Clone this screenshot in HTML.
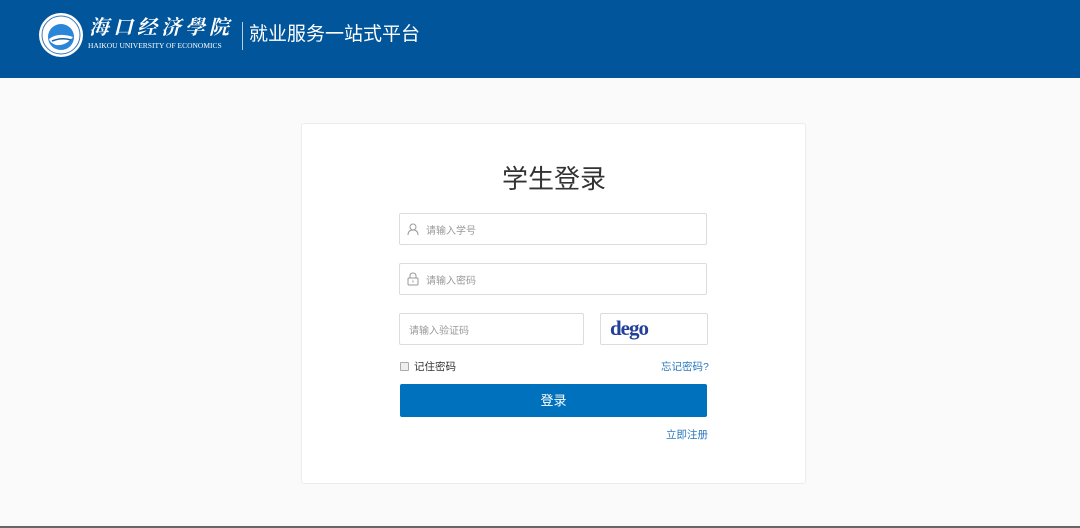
<!DOCTYPE html>
<html><head><meta charset="utf-8"><style>
*{margin:0;padding:0;box-sizing:border-box}
body{width:1080px;height:528px;background:#fafafa;font-family:"Liberation Sans","Noto Sans CJK SC",sans-serif;position:relative;overflow:hidden}
.hd{position:absolute;left:0;top:0;width:1080px;height:78px;background:#00559b}
.card{position:absolute;left:301px;top:123px;width:505px;height:361px;background:#fff;border:1px solid #ececec;border-radius:3px}
.inp{position:absolute;background:#fff;border:1px solid #dcdcdc;border-radius:2px;font-size:10px;color:#999;display:flex;align-items:center}
.a{position:absolute}
</style></head><body>
<div class="hd">
 <svg class="a" style="left:38px;top:12px" width="46" height="46" viewBox="0 0 46 46">
  <circle cx="23" cy="23" r="22" fill="#fff"/>
  <circle cx="23" cy="23" r="19" fill="#fff" stroke="#3a78c0" stroke-width="1"/>
  <circle cx="23" cy="25" r="13" fill="#2a86d8"/>
  <path d="M11 27 Q20 20 35 25 Q28 34 18 33 Q12 31 11 27Z" fill="#fff"/>
  <path d="M14 29 Q24 25 33 28" stroke="#1a5fa8" stroke-width="1.5" fill="none"/>
 </svg>
 <div class="a" style="left:89px;top:13px;color:#fff;font-family:'Noto Serif CJK SC',serif;font-size:20px;font-weight:bold;letter-spacing:4px;font-style:italic;line-height:26px;white-space:nowrap">海口经济學院</div>
 <div class="a" style="left:88px;top:41px;color:#fff;font-family:'Liberation Serif',serif;font-size:7.5px;white-space:nowrap">HAIKOU UNIVERSITY OF ECONOMICS</div>
 <div class="a" style="left:242px;top:22px;width:1px;height:28px;background:#b8cde4"></div>
 <div class="a" style="left:249px;top:22px;color:#fff;font-size:19px;line-height:26px;white-space:nowrap">就业服务一站式平台</div>
</div>
<div class="card"></div>
<div class="a" style="left:0;top:161px;width:1108px;text-align:center;font-size:26px;color:#333;line-height:36px">学生登录</div>
<div class="inp" style="left:399px;top:213px;width:308px;height:32px;padding-left:26px">请输入学号
 <svg class="a" style="left:7px;top:9px" width="12" height="12" viewBox="0 0 12 12"><circle cx="6" cy="4" r="3" fill="none" stroke="#999"/><path d="M1 12 Q1 7 6 7 Q11 7 11 12" fill="none" stroke="#999"/></svg></div>
<div class="inp" style="left:399px;top:263px;width:308px;height:32px;padding-left:26px">请输入密码
 <svg class="a" style="left:7px;top:8px" width="12" height="14" viewBox="0 0 12 14"><path d="M3 6 V4 Q3 1 6 1 Q9 1 9 4 V6" fill="none" stroke="#999"/><rect x="1" y="6" width="10" height="7" rx="1" fill="none" stroke="#999"/><rect x="5.5" y="8.5" width="1" height="2" fill="#999"/></svg></div>
<div class="inp" style="left:399px;top:313px;width:185px;height:32px;padding-left:9px">请输入验证码</div>
<div class="inp" style="left:600px;top:313px;width:108px;height:32px"></div>
<div class="a" style="left:610px;top:316px;font-family:'Liberation Serif',serif;font-weight:bold;font-size:21px;line-height:24px;color:#233f9a;letter-spacing:-1px">dego</div>
<div class="a" style="left:400px;top:362px;width:9px;height:9px;border:1px solid #aaa;background:#eee;border-radius:1px"></div>
<div class="a" style="left:414px;top:359px;font-size:10.5px;color:#333">记住密码</div>
<div class="a" style="left:661px;top:359px;font-size:10.5px;color:#2878c0">忘记密码?</div>
<div class="a" style="left:400px;top:384px;width:307px;height:33px;background:#0071bc;border-radius:2px;color:#fff;font-size:13px;line-height:33px;text-align:center">登录</div>
<div class="a" style="left:666px;top:427px;font-size:10.5px;color:#2878c0">立即注册</div>
<div class="a" style="left:0;top:526px;width:1080px;height:2px;background:#666"></div>
</body></html>
